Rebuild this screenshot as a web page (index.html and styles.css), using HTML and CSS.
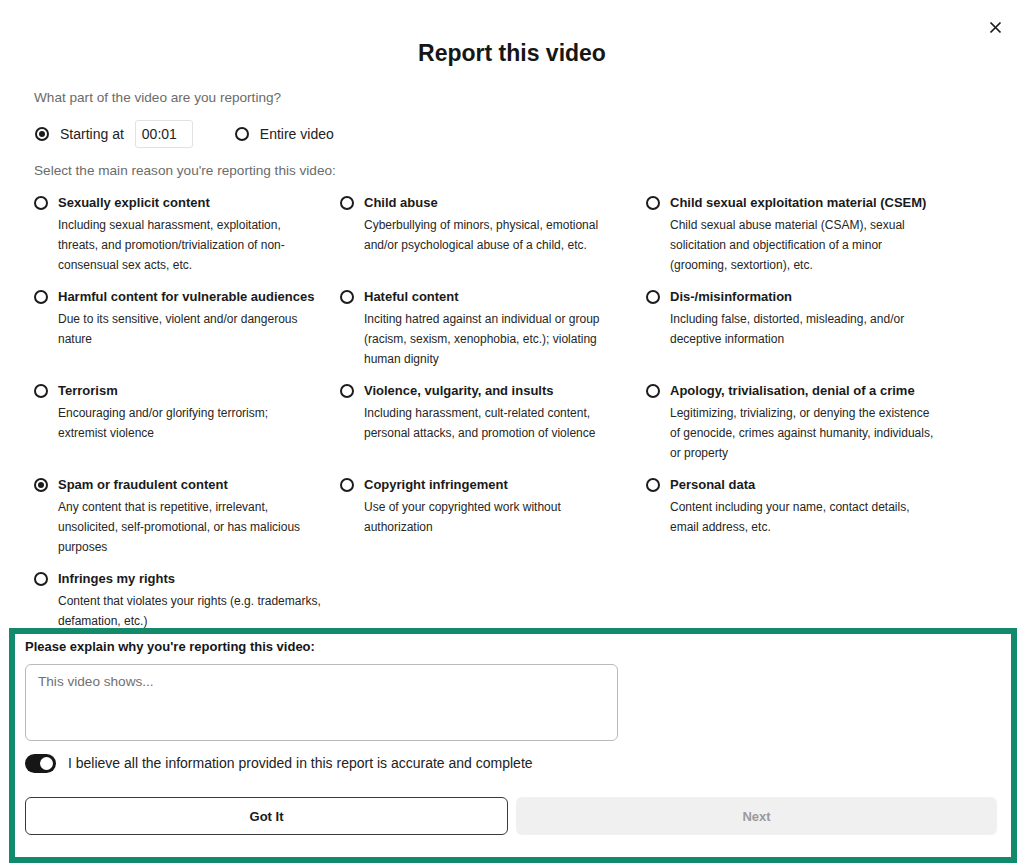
FILE: index.html
```html
<!DOCTYPE html>
<html lang="en">
<head>
<meta charset="utf-8">
<title>Report this video</title>
<link rel="stylesheet" href="styles.css">
</head>
<body>
<div class="modal">
  <button class="close" aria-label="Close">
    <svg width="13" height="13" viewBox="0 0 13 13"><path d="M1.5 1.5L11.5 11.5M11.5 1.5L1.5 11.5" stroke="#1a1a1a" stroke-width="1.7" fill="none"/></svg>
  </button>
  <h1 class="title">Report this video</h1>

  <div class="main">
    <p class="question">What part of the video are you reporting?</p>
    <div class="part-row">
      <label class="opt"><span class="radio checked"></span>Starting at</label>
      <span class="time">00:01</span>
      <label class="opt entire"><span class="radio"></span>Entire video</label>
    </div>
    <p class="question reason-q">Select the main reason you're reporting this video:</p>

    <div class="reasons">
      <div class="reason"><span class="radio"></span><div><div class="r-title">Sexually explicit content</div><div class="r-desc">Including sexual harassment, exploitation,<br>threats, and promotion/trivialization of non-<br>consensual sex acts, etc.</div></div></div>
      <div class="reason"><span class="radio"></span><div><div class="r-title">Child abuse</div><div class="r-desc">Cyberbullying of minors, physical, emotional<br>and/or psychological abuse of a child, etc.</div></div></div>
      <div class="reason"><span class="radio"></span><div><div class="r-title">Child sexual exploitation material (CSEM)</div><div class="r-desc">Child sexual abuse material (CSAM), sexual<br>solicitation and objectification of a minor<br>(grooming, sextortion), etc.</div></div></div>

      <div class="reason"><span class="radio"></span><div><div class="r-title">Harmful content for vulnerable audiences</div><div class="r-desc">Due to its sensitive, violent and/or dangerous<br>nature</div></div></div>
      <div class="reason"><span class="radio"></span><div><div class="r-title">Hateful content</div><div class="r-desc">Inciting hatred against an individual or group<br>(racism, sexism, xenophobia, etc.); violating<br>human dignity</div></div></div>
      <div class="reason"><span class="radio"></span><div><div class="r-title">Dis-/misinformation</div><div class="r-desc">Including false, distorted, misleading, and/or<br>deceptive information</div></div></div>

      <div class="reason"><span class="radio"></span><div><div class="r-title">Terrorism</div><div class="r-desc">Encouraging and/or glorifying terrorism;<br>extremist violence</div></div></div>
      <div class="reason"><span class="radio"></span><div><div class="r-title">Violence, vulgarity, and insults</div><div class="r-desc">Including harassment, cult-related content,<br>personal attacks, and promotion of violence</div></div></div>
      <div class="reason"><span class="radio"></span><div><div class="r-title">Apology, trivialisation, denial of a crime</div><div class="r-desc">Legitimizing, trivializing, or denying the existence<br>of genocide, crimes against humanity, individuals,<br>or property</div></div></div>

      <div class="reason"><span class="radio checked"></span><div><div class="r-title">Spam or fraudulent content</div><div class="r-desc">Any content that is repetitive, irrelevant,<br>unsolicited, self-promotional, or has malicious<br>purposes</div></div></div>
      <div class="reason"><span class="radio"></span><div><div class="r-title">Copyright infringement</div><div class="r-desc">Use of your copyrighted work without<br>authorization</div></div></div>
      <div class="reason"><span class="radio"></span><div><div class="r-title">Personal data</div><div class="r-desc">Content including your name, contact details,<br>email address, etc.</div></div></div>

      <div class="reason"><span class="radio"></span><div><div class="r-title">Infringes my rights</div><div class="r-desc">Content that violates your rights (e.g. trademarks,<br>defamation, etc.)</div></div></div>
    </div>
  </div>

  <section class="explain">
    <div class="explain-label">Please explain why you're reporting this video:</div>
    <div class="textbox">This video shows...</div>
    <div class="confirm">
      <span class="toggle"><span class="knob"></span></span>
      <span>I believe all the information provided in this report is accurate and complete</span>
    </div>
    <div class="actions">
      <button class="btn btn-outline">Got It</button>
      <button class="btn btn-disabled">Next</button>
    </div>
  </section>
</div>
</body>
</html>
```

FILE: styles.css
```css
* { box-sizing: border-box; }

html, body {
  margin: 0;
  background: #fff;
}

body {
  font-family: "Liberation Sans", Arial, sans-serif;
  color: #1f1f1f;
}

.modal {
  position: relative;
  width: 1024px;
  height: 866px;
  padding-top: 39px;
  overflow: hidden;
}

.close {
  position: absolute;
  top: 20px;
  right: 21px;
  width: 15px;
  height: 15px;
  padding: 0;
  border: 0;
  background: none;
  display: flex;
  align-items: center;
  justify-content: center;
}

.title {
  margin: 0;
  text-align: center;
  font-size: 23px;
  line-height: 28px;
  font-weight: 700;
  color: #161616;
}

.main {
  padding-left: 34px;
}

.question {
  margin: 23px 0 0;
  font-size: 13.6px;
  line-height: 16px;
  color: #6b6b6b;
}

.reason-q {
  margin-top: 15px;
}

.part-row {
  margin-top: 14px;
  display: flex;
  align-items: center;
  height: 28px;
  font-size: 14px;
  color: #222;
}

.opt {
  display: flex;
  align-items: center;
  gap: 11px;
}

.radio {
  flex: none;
  width: 14px;
  height: 14px;
  border: 2px solid #1c1c1c;
  border-radius: 50%;
  display: inline-flex;
  align-items: center;
  justify-content: center;
}

.part-row .radio {
  margin-left: 1px;
}

.radio.checked::after {
  content: "";
  width: 6px;
  height: 6px;
  border-radius: 50%;
  background: #1c1c1c;
}

.time {
  margin-left: 11px;
  width: 58px;
  height: 28px;
  border: 1px solid #e2e2e2;
  border-radius: 3px;
  display: flex;
  align-items: center;
  padding-left: 6px;
  font-size: 14px;
  color: #222;
}

.entire {
  margin-left: 41px;
}

.reasons {
  margin-top: 14px;
  display: grid;
  grid-template-columns: 306px 306px 306px;
  grid-template-rows: repeat(4, 82px) auto;
  row-gap: 12px;
}

.reason {
  display: flex;
  gap: 10px;
}

.reason .radio {
  margin-top: 3px;
}

.r-title {
  font-size: 13px;
  line-height: 20px;
  font-weight: 700;
  color: #1a1a1a;
  margin-bottom: 2px;
}

.r-desc {
  font-size: 12px;
  line-height: 20px;
  color: #262626;
  white-space: nowrap;
}

.explain {
  margin: -3px 0 0 9px;
  width: 1008px;
  height: 235px;
  border: 6px solid #138a6c;
  padding: 5px 7px 0 10px;
}

.explain-label {
  font-size: 13px;
  line-height: 16px;
  font-weight: 700;
  color: #161616;
}

.textbox {
  margin-top: 9px;
  width: 593px;
  height: 77px;
  border: 1px solid #b9b9b9;
  border-radius: 6px;
  padding: 9px 12px;
  font-size: 13.6px;
  line-height: 16px;
  color: #707070;
}

.confirm {
  margin-top: 12px;
  display: flex;
  align-items: center;
  gap: 12px;
  height: 20px;
  font-size: 14px;
  color: #222;
}

.toggle {
  flex: none;
  width: 31px;
  height: 19px;
  border-radius: 10px;
  background: #161616;
  display: flex;
  align-items: center;
  justify-content: flex-end;
  padding-right: 3px;
}

.knob {
  width: 13px;
  height: 13px;
  border-radius: 50%;
  background: #fff;
}

.actions {
  margin-top: 24px;
  display: flex;
  gap: 8px;
}

.btn {
  height: 38px;
  border-radius: 6px;
  font-family: inherit;
  font-size: 13px;
  font-weight: 700;
}

.btn-outline {
  width: 483px;
  border: 1px solid #3a3a3a;
  background: #fff;
  color: #1a1a1a;
}

.btn-disabled {
  width: 481px;
  border: 0;
  background: #f0f0f0;
  color: #9a9a9a;
}
```
